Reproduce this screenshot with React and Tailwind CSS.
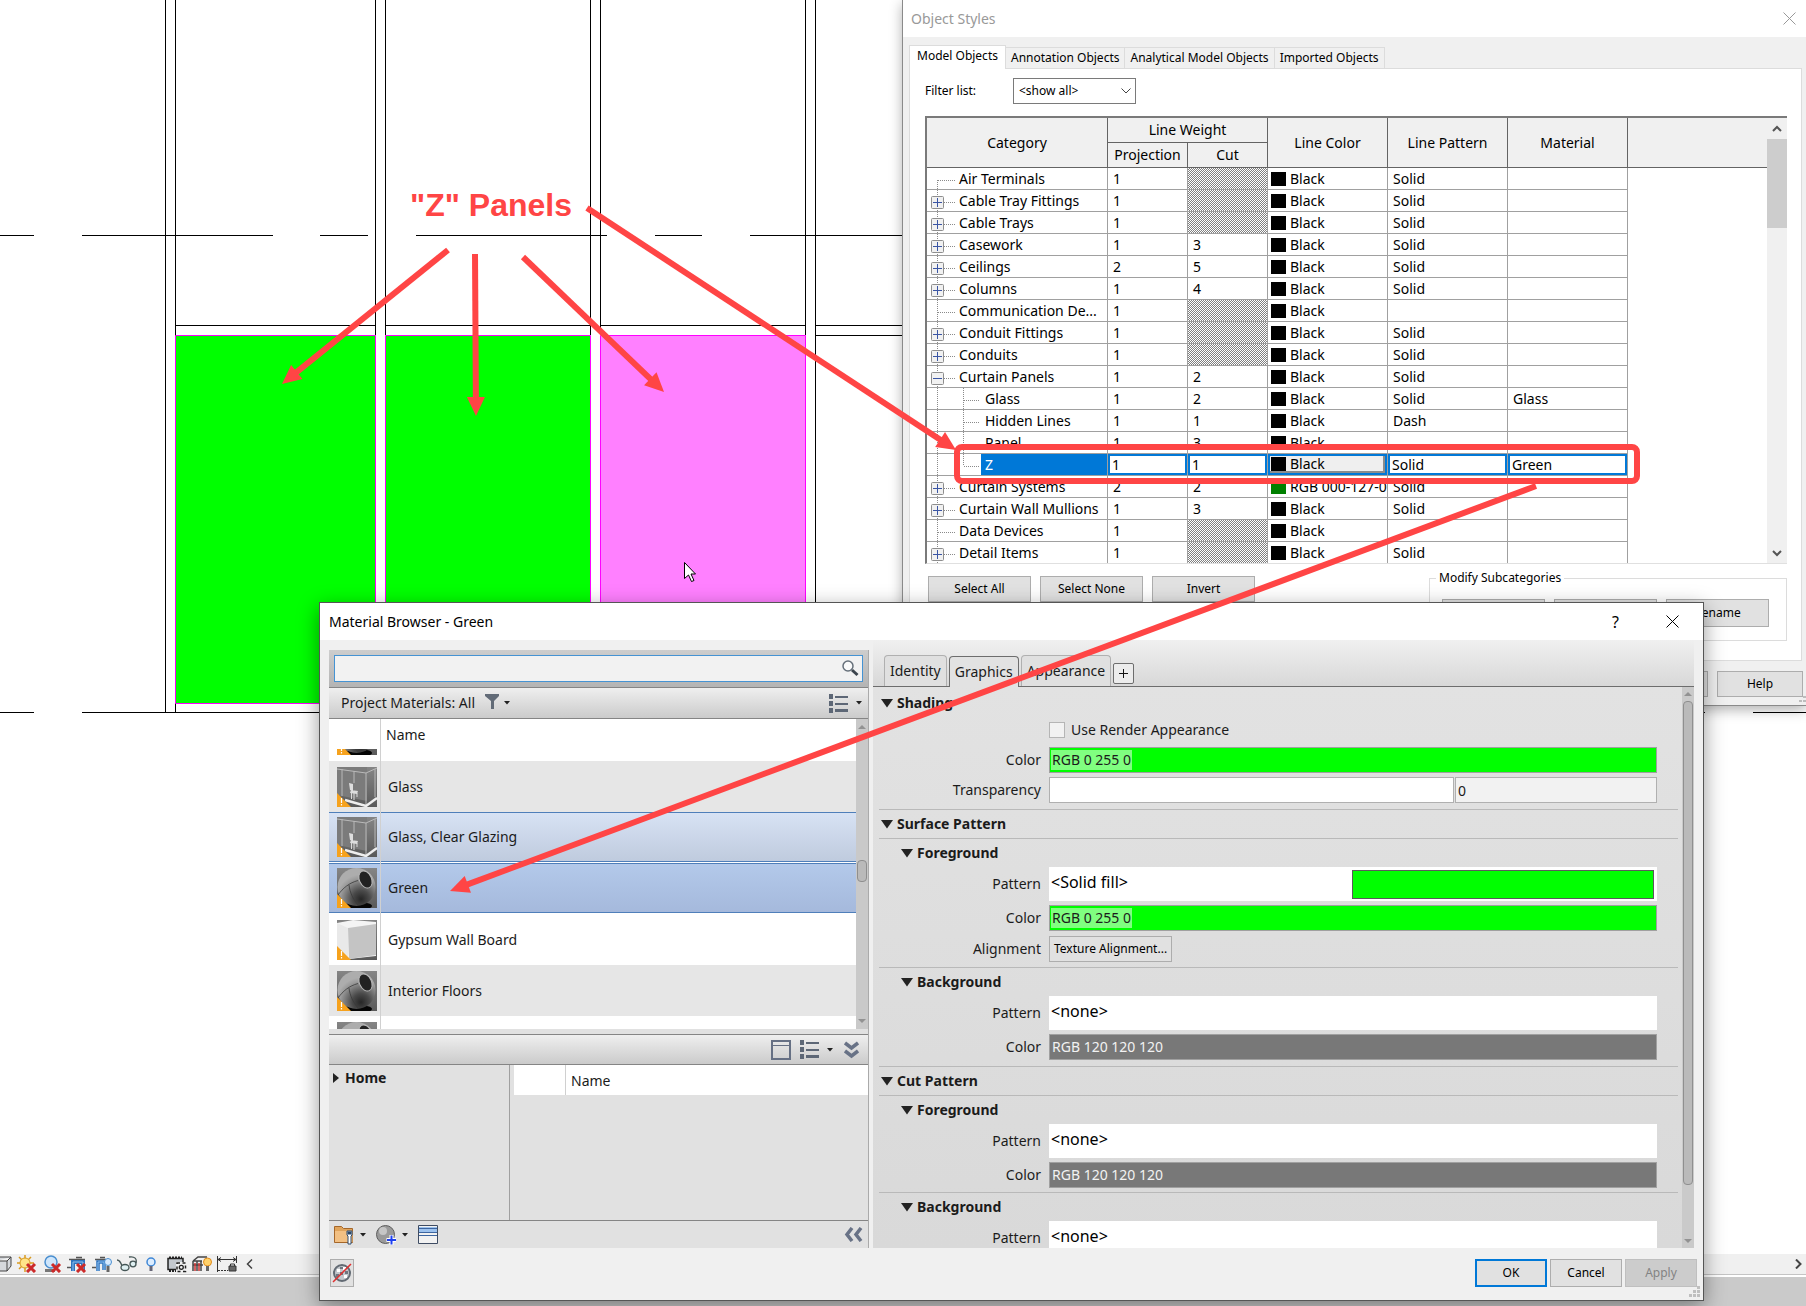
import React, { useState } from "react";
import clsx from "clsx";

const categories = [
  { name: "Air Terminals", projection: "1", color: "Black", pattern: "Solid" },
  { name: "Cable Tray Fittings", toggle: "+", projection: "1", color: "Black", pattern: "Solid" },
  { name: "Cable Trays", toggle: "+", projection: "1", color: "Black", pattern: "Solid" },
  { name: "Casework", toggle: "+", projection: "1", cut: "3", color: "Black", pattern: "Solid" },
  { name: "Ceilings", toggle: "+", projection: "2", cut: "5", color: "Black", pattern: "Solid" },
  { name: "Columns", toggle: "+", projection: "1", cut: "4", color: "Black", pattern: "Solid" },
  { name: "Communication De...", projection: "1", color: "Black" },
  { name: "Conduit Fittings", toggle: "+", projection: "1", color: "Black", pattern: "Solid" },
  { name: "Conduits", toggle: "+", projection: "1", color: "Black", pattern: "Solid" },
  { name: "Curtain Panels", toggle: "-", projection: "1", cut: "2", color: "Black", pattern: "Solid" },
  { name: "Glass", child: true, projection: "1", cut: "2", color: "Black", pattern: "Solid", material: "Glass" },
  { name: "Hidden Lines", child: true, projection: "1", cut: "1", color: "Black", pattern: "Dash" },
  { name: "Panel", child: true, projection: "1", cut: "3", color: "Black" },
  { name: "Z", child: true, last: true, selected: true, projection: "1", cut: "1", color: "Black", pattern: "Solid", material: "Green" },
  { name: "Curtain Systems", toggle: "+", projection: "2", cut: "2", color: "RGB 000-127-000", swatch: "#008000", pattern: "Solid" },
  { name: "Curtain Wall Mullions", toggle: "+", projection: "1", cut: "3", color: "Black", pattern: "Solid" },
  { name: "Data Devices", projection: "1", color: "Black" },
  { name: "Detail Items", toggle: "+", projection: "1", color: "Black", pattern: "Solid" }
];

const materials = [
  { name: "Glass", thumb: "glass", row: "h-[51px] bg-[#e6e6e6]" },
  { name: "Glass, Clear Glazing", thumb: "glass", row: "mb-px h-[50px] bg-linear-to-b from-[#d7e2f4] to-[#bfcbde] border-y border-[#4f7fba]" },
  { name: "Green", thumb: "sphere", row: "mb-px h-[50px] bg-linear-to-b from-[#b3c9ea] to-[#a5b9dc] border-y border-[#4f7fba]" },
  { name: "Gypsum Wall Board", thumb: "cube", row: "h-[51px] bg-white" },
  { name: "Interior Floors", thumb: "sphere", row: "h-[51px] bg-[#e6e6e6]" },
  { name: "", thumb: "sphere", row: "h-[51px] bg-white" }
];

const styleTabs = ["Model Objects", "Annotation Objects", "Analytical Model Objects", "Imported Objects"];

const cell = "border-r border-b border-[#a0a0a0] p-0 whitespace-nowrap overflow-hidden";
const headCell = "border-r border-b border-[#646464] p-0 font-normal";
const pushButton = "border border-[#adadad] bg-[#e1e1e1] text-[12px] leading-4 text-center";

const CloseIcon = ({ className }) => (
  <svg viewBox="0 0 13 13" className={clsx("h-[13px] w-[13px]", className)} fill="none" stroke="currentColor">
    <path d="M.5.5l12 12M12.5.5l-12 12" />
  </svg>
);

const Caret = () => (
  <svg viewBox="0 0 6 4" className="h-1 w-1.5 shrink-0"><path d="M0 0h6L3 3.500z" fill="#222" /></svg>
);

const Triangle = ({ className }) => (
  <svg viewBox="0 0 12 9" className={clsx("h-[9px] w-3 shrink-0", className)}><path d="M0 0h12L6 8.500z" fill="#222" /></svg>
);

const ListIcon = () => (
  <svg viewBox="0 0 19 19" className="h-[19px] w-[19px] shrink-0" fill="#5d6776">
    <path d="M0 0h4v5H0zM0 7h4v5H0zM0 14h4v5H0zM6 2h13v2H6zM6 9h13v2H6zM6 15h13v3H6z" />
  </svg>
);

const DottedLine = (props) => <path stroke="#8a8a8a" strokeDasharray="1 1" fill="none" {...props} />;

const TreeLines = ({ item, first }) => (
  <svg className={clsx("h-[21px] shrink-0", item.child ? "w-[54px]" : "w-[28px]")}>
    <DottedLine d={first ? "M10.500 12V22" : "M10.500 0V22"} />
    {item.child ? (
      <>
        <DottedLine d={item.last ? "M36.500 0V12" : "M36.500 0V22"} />
        <DottedLine d="M37 12.500H53" />
      </>
    ) : (
      <DottedLine d="M11 12.500H28" />
    )}
    {item.toggle && (
      <>
        <rect x="4.500" y="6.500" width="12" height="12" rx="1" fill="#f1f1f1" stroke="#8e8e8e" />
        <path d={item.toggle === "+" ? "M6 12.500h9M10.500 8v9" : "M6 12.500h9"} stroke="#3a55a4" />
      </>
    )}
  </svg>
);

const CategoryRow = ({ item, first }) => {
  const noCut = !item.cut;
  if (item.selected) {
    const input = "block h-[21px] w-full border-2 border-[#0078d7] bg-white px-0.5 outline-none";
    return (
      <tr className="h-[22px]">
        <td className={cell}>
          <div className="flex h-[21px]">
            <TreeLines item={item} />
            <span className="flex-1 bg-[#0078d7] pl-1 leading-[21px] text-white">{item.name}</span>
          </div>
        </td>
        <td className={cell}><input aria-label="Projection" className={input} defaultValue={item.projection} /></td>
        <td className={cell}><input aria-label="Cut" className={input} defaultValue={item.cut} /></td>
        <td className={cell}>
          <div className="h-[21px] border-2 border-[#0078d7]">
            <button className="flex h-[17px] w-full items-center border-r-2 border-b-2 border-[#8c8c8c] bg-[#efefef] pl-px">
              <span className="mr-1 h-[14px] w-[15px] bg-black" />
              {item.color}
            </button>
          </div>
        </td>
        <td className={cell}><input aria-label="Line Pattern" className={input} defaultValue={item.pattern} /></td>
        <td className={cell}><input aria-label="Material" className={input} defaultValue={item.material} /></td>
        <td className="p-0" />
      </tr>
    );
  }
  return (
    <tr className="h-[22px]">
      <td className={cell}>
        <div className="flex h-[21px]">
          <TreeLines item={item} first={first} />
          <span className="pl-1 leading-[21px]">{item.name}</span>
        </div>
      </td>
      <td className={clsx(cell, "pl-[5px]")}>{item.projection}</td>
      <td className={clsx(cell, noCut ? "bg-[repeating-conic-gradient(#808080_0_25%,#fff_0_50%)] bg-size-[2px_2px]" : "pl-[5px]")}>{item.cut}</td>
      <td className={clsx(cell, "pl-[3px]")}>
        <div className="flex h-[21px] items-center">
          <span className="mr-1 h-[14px] w-[15px] shrink-0" style={{ background: item.swatch || "#000" }} />
          {item.color}
        </div>
      </td>
      <td className={clsx(cell, "pl-[5px]")}>{item.pattern}</td>
      <td className={clsx(cell, "pl-[5px]")}>{item.material}</td>
      <td className="p-0" />
    </tr>
  );
};

const ObjectStyles = () => {
  const [tab, setTab] = useState("Model Objects");

  return (
    <div className="absolute top-0 right-0 left-[902px] border-b border-l border-[#8a8a8a] bg-[#f0f0f0] shadow-[0_4px_12px_rgba(0,0,0,0.3)]">
      <div className="flex h-[37px] items-center justify-between bg-white pr-2.5 pl-2 text-[14px] text-[#999]">
        <span>Object Styles</span>
        <button aria-label="Close"><CloseIcon /></button>
      </div>

      <div className="pt-2 pr-1 pl-1.5">
        <div className="flex h-[23px] items-end text-[12px]">
          {styleTabs.map((name) => (
            <button
              key={name}
              onClick={() => setTab(name)}
              className={clsx(
                "border-t border-r border-[#dcdcdc] whitespace-nowrap",
                name === tab ? "relative -mb-px h-6 border-l bg-white px-[7px] pb-1" : "h-[21px] px-[5px]"
              )}
            >
              {name}
            </button>
          ))}
        </div>

        <div className="border border-[#dcdcdc] bg-white pt-[9px] pr-[14px] pb-[19px] pl-[15px]">
          <div className="flex h-[26px] items-center text-[12px]">
            <label htmlFor="filter" className="w-[88px]">Filter list:</label>
            <div className="relative">
              <select id="filter" className="h-[26px] w-[123px] appearance-none border border-[#7a7a7a] bg-white pl-[5px]">
                <option>&lt;show all&gt;</option>
              </select>
              <svg viewBox="0 0 10 6" className="pointer-events-none absolute top-2.5 right-[5px] h-1.5 w-2.5" fill="none" stroke="#444">
                <path d="M.5.5L5 5 9.500.5" />
              </svg>
            </div>
          </div>

          <div className="mt-3 flex h-[448px] overflow-hidden border-t-2 border-b border-l-2 border-[#7a7a7a] border-b-[#e0e0e0]">
            <table className="w-full table-fixed border-separate border-spacing-0 text-[14px] leading-5">
              <colgroup>
                <col className="w-[181px]" />
                <col className="w-20" />
                <col className="w-20" />
                <col className="w-[120px]" />
                <col className="w-[120px]" />
                <col className="w-[120px]" />
                <col />
              </colgroup>
              <thead className="bg-[#f0f0f0]">
                <tr className="h-[25px]">
                  <th rowSpan={2} className={headCell}>Category</th>
                  <th colSpan={2} className={headCell}>Line Weight</th>
                  <th rowSpan={2} className={headCell}>Line Color</th>
                  <th rowSpan={2} className={headCell}>Line Pattern</th>
                  <th rowSpan={2} className={headCell}>Material</th>
                  <th rowSpan={2} className="border-b border-[#646464]" />
                </tr>
                <tr className="h-[25px]">
                  <th className={headCell}>Projection</th>
                  <th className={headCell}>Cut</th>
                </tr>
              </thead>
              <tbody>
                {categories.map((item, i) => (
                  <CategoryRow key={item.name} item={item} first={i === 0} />
                ))}
              </tbody>
            </table>
            <div className="flex w-5 shrink-0 flex-col items-center justify-between bg-[#f0f0f0] pb-1.5">
              <div className="flex w-full flex-col items-center">
                <svg viewBox="0 0 10 7" className="my-[7px] h-[7px] w-2.5" fill="none" stroke="#555" strokeWidth="2"><path d="M1 6l4-4 4 4" /></svg>
                <div className="h-[89px] w-full bg-[#cdcdcd]" />
              </div>
              <svg viewBox="0 0 10 7" className="h-[7px] w-2.5" fill="none" stroke="#555" strokeWidth="2"><path d="M1 1l4 4 4-4" /></svg>
            </div>
          </div>

          <div className="flex justify-between">
            <div className="mt-3 ml-[3px] flex gap-[9px]">
              {["Select All", "Select None", "Invert"].map((name) => (
                <button key={name} className={clsx(pushButton, "h-[26px] w-[103px]")}>{name}</button>
              ))}
            </div>
            <fieldset className="mt-1.5 h-[71px] w-[358px] border border-[#dcdcdc] px-3 text-[12px]">
              <legend className="-ml-1.5 px-[3px] leading-4">Modify Subcategories</legend>
              <div className="mt-[13px] flex gap-[9px]">
                {["New", "Delete", "Rename"].map((name) => (
                  <button key={name} className={clsx(pushButton, "h-7 w-[103px]")}>{name}</button>
                ))}
              </div>
            </fieldset>
          </div>
        </div>
      </div>

      <div className="relative flex justify-end gap-[9px] pt-2.5 pr-[3px] pb-2">
        {["OK", "Cancel", "Apply", "Help"].map((name) => (
          <button key={name} className={clsx(pushButton, "h-[26px] w-[86px]")}>{name}</button>
        ))}
        <svg viewBox="0 0 8 8" className="absolute right-0 bottom-0.5 h-2 w-2" fill="#bdbdbd"><path d="M5 1h3v2H5zM1 5h3v2H1zM5 5h3v2H5z" /></svg>
      </div>
    </div>
  );
};

const Warning = () => (
  <>
    <path d="M0 26L14 40H0z" fill="#f6a21d" />
    <path d="M4.500 31v5M4.500 37v1.500" stroke="#fff" strokeWidth="1.200" />
  </>
);

const Thumb = ({ kind }) => (
  <svg viewBox="0 0 40 40" className="h-10 w-10 shrink-0">
    <defs>
      <radialGradient id="ball" cx="0.620" cy="0.820" r="0.650">
        <stop offset="0" stopColor="#262626" />
        <stop offset="0.350" stopColor="#4a4a4a" />
        <stop offset="0.850" stopColor="#9c9c9c" />
        <stop offset="1" stopColor="#adadad" />
      </radialGradient>
      <linearGradient id="backdrop" x1="0" y1="0" x2="0" y2="1">
        <stop offset="0" stopColor="#858585" />
        <stop offset="1" stopColor="#5a5a5a" />
      </linearGradient>
    </defs>
    <rect width="40" height="40" fill="url(#backdrop)" />
    {kind === "sphere" && (
      <>
        <ellipse cx="21" cy="38" rx="14" ry="4" fill="#050505" />
        <circle cx="19.500" cy="19" r="19" fill="url(#ball)" />
        <ellipse cx="28.500" cy="11.500" rx="6" ry="9" fill="#222" stroke="#b9b9b9" transform="rotate(-25 28.500 11.500)" />
        <path d="M1 27C6 20 12 15 21 12.500M12 17c1 8 4 14 9 20" fill="none" stroke="#3a3a3a" strokeWidth="0.800" />
      </>
    )}
    {kind === "glass" && (
      <>
        <path d="M0 0h30v34L0 28z" fill="#7b7b7b" />
        <path d="M0 2l29 4 11-5M5 2v27M17 4v12M29 6v32M38 2v28" fill="none" stroke="#b9b9b9" />
        <path d="M8 33l21 6 11-8" fill="none" stroke="#efefef" strokeWidth="2.500" />
        <path d="M12 16l4 1v7l-3-1zM14 23l7 1-1 3-7-1z" fill="#dedede" />
        <path d="M14.500 26v6M20 26v4M17 26v7" fill="none" stroke="#dcdcdc" />
      </>
    )}
    {kind === "cube" && (
      <>
        <path d="M0 3l16-3 23 2v34l-27 3L0 28z" fill="#f4f4f4" />
        <path d="M11 8l28-4v31l-27 4z" fill="#c4c4c4" />
        <path d="M0 3l11 5v29L0 28z" fill="#e9e9e9" />
      </>
    )}
    <Warning />
  </svg>
);

const MaterialList = () => (
  <div className="flex h-[310px] bg-white">
    <div className="relative min-w-0 flex-1 overflow-hidden">
      <div className="flex h-[42px]">
        <div className="flex w-[51px] items-end pb-1.5 pl-2">
          <div className="flex h-1.5 w-10 items-end overflow-hidden"><Thumb kind="sphere" /></div>
        </div>
        <span className="pt-1.5 pl-1.5">Name</span>
      </div>
      {materials.map((m, i) => (
        <button key={i} className={clsx("flex w-full items-center pl-2 text-left", m.row)}>
          <Thumb kind={m.thumb} />
          <span className="pl-[11px]">{m.name}</span>
        </button>
      ))}
      <div className="absolute inset-y-0 left-[51px] w-px bg-[#d0d0d0]" />
    </div>
    <div className="flex w-3 shrink-0 flex-col items-center bg-[#c9c9c9] py-1.5">
      <svg viewBox="0 0 8 4" className="h-1 w-2"><path d="M0 4h8L4 0z" fill="#929292" /></svg>
      <div className="mt-[131px] h-[22px] w-2.5 rounded-sm border border-[#8f8f8f] bg-[#bababa]" />
      <svg viewBox="0 0 8 4" className="mt-auto h-1 w-2"><path d="M0 0h8L4 4z" fill="#929292" /></svg>
    </div>
  </div>
);

const toolbar = "flex shrink-0 items-center border-y border-[#858585] bg-linear-to-b from-[#efefef] to-[#cbcbcb]";

const MaterialPanel = () => (
  <div className="mt-2.5 ml-[9px] flex w-[540px] shrink-0 flex-col border-r border-[#aaa] bg-[#e1e1e1]">
    <div className="bg-linear-to-b from-[#cdcdcd] to-[#b4b4b4] p-[5px]">
      <div className="relative">
        <input aria-label="Search materials" className="block h-[27px] w-full border border-[#4593d3] bg-[#f2f2f2] px-1 outline-none" />
        <svg viewBox="0 0 18 18" className="absolute top-1 right-1 h-[18px] w-[18px]" fill="none">
          <circle cx="7" cy="7" r="5" fill="#fafafa" stroke="#66707a" strokeWidth="1.500" />
          <path d="M11 11l5.500 5" stroke="#3c444d" strokeWidth="3" />
        </svg>
      </div>
    </div>

    <div className={clsx(toolbar, "h-8 pr-1.5 pl-3")}>
      <button className="flex items-center">
        Project Materials: All
        <svg viewBox="0 0 14 15" className="mr-[5px] mb-1 ml-2.5 h-[15px] w-3.5" fill="#626b77"><path d="M0 0h14v2L9 7v8H6V7L0 2z" /></svg>
        <Caret />
      </button>
      <button aria-label="View" className="ml-auto flex items-center gap-2"><ListIcon /><Caret /></button>
    </div>

    <MaterialList />

    <div className={clsx(toolbar, "mt-[5px] h-[31px] justify-end gap-[9px] pr-[9px]")}>
      <button aria-label="Show library panel">
        <svg viewBox="0 0 20 20" className="block h-5 w-5" fill="none" stroke="#667084"><path d="M1 1h18v18H1z" strokeWidth="2" /><path d="M2 5.500h16" /></svg>
      </button>
      <button aria-label="Library view" className="flex items-center gap-2"><ListIcon /><Caret /></button>
      <button aria-label="Collapse" className="ml-0.5">
        <svg viewBox="0 0 15 18" className="block h-[18px] w-[15px]" fill="none" stroke="#687286" strokeWidth="3.500"><path d="M1 2l6.500 5L14 2M1 10l6.500 5 6.500-5" /></svg>
      </button>
    </div>

    <div className="flex min-h-0 flex-1">
      <div className="w-[181px] shrink-0 border-r border-[#a0a0a0]">
        <button className="flex items-center gap-1.5 pt-[3px] pl-1 font-bold">
          <svg viewBox="0 0 6 10" className="h-2.5 w-1.5"><path d="M0 0v10l6-5z" fill="#222" /></svg>
          Home
        </button>
      </div>
      <div className="ml-1 flex h-[30px] flex-1 items-center bg-white">
        <div className="h-full w-[52px] border-r border-[#d0d0d0]" />
        <span className="pt-0.5 pl-[5px]">Name</span>
      </div>
    </div>

    <div className="flex h-[28px] shrink-0 items-center border-t border-[#858585] px-[5px]">
      <button aria-label="Libraries" className="flex items-center gap-1.5">
        <svg viewBox="0 0 20 20" className="h-5 w-5">
          <path d="M.5 1.500h7l2 2h9v14H.5z" fill="#e0a45c" stroke="#a5672a" />
          <path d="M1 6h17.500v11H1z" fill="#f2c083" />
          <path d="M13 6h5v4l-1 1v8h-3v-8l-1-1z" fill="#fff" stroke="#2c4a6c" />
          <path d="M13.500 6.500h4v3h-4z" fill="#2c4a6c" />
        </svg>
        <Caret />
      </button>
      <button aria-label="New material" className="ml-2.5 flex items-center gap-1.5">
        <svg viewBox="0 0 20 20" className="h-5 w-5">
          <circle cx="9.500" cy="9.500" r="9" fill="#9a9a9a" stroke="#5d5d5d" />
          <circle cx="7" cy="6" r="4" fill="#c6c6c6" />
          <path d="M15.500 10v10M10.500 15h10" stroke="#fff" strokeWidth="4" />
          <path d="M15.500 10.500v9M11 15h9" stroke="#1d3ff0" strokeWidth="2" />
        </svg>
        <Caret />
      </button>
      <button aria-label="Asset browser" className="ml-2.5">
        <svg viewBox="0 0 20 19" className="block h-[19px] w-5">
          <path d="M.5.500h19v18H.5z" fill="#f2f2f2" stroke="#3f4c63" />
          <path d="M1 2h18v5H1z" fill="#9cc2ef" />
          <path d="M1 3.500h18M1 7.500h18M1 10.500h18" stroke="#3e66a0" />
        </svg>
      </button>
      <button aria-label="Hide panel" className="ml-auto">
        <svg viewBox="0 0 19 15" className="block h-[15px] w-[19px]" fill="none" stroke="#687286" strokeWidth="3.500"><path d="M8 1L3 7.500 8 14M17 1l-5 6.500 5 6.500" /></svg>
      </button>
    </div>
  </div>
);

const Heading = ({ children, nested }) => (
  <h3 className={clsx("flex h-7 items-center gap-1 font-bold", nested ? "pl-[22px]" : "pl-0.5")}>
    <Triangle />
    {children}
  </h3>
);

const Row = ({ label, children }) => (
  <div className="flex items-center gap-2 pr-[21px]">
    <span className="w-[162px] shrink-0 text-right">{label}</span>
    <div className="flex min-w-0 flex-1 gap-px">{children}</div>
  </div>
);

const ColorField = ({ green }) => (
  <button
    className={clsx(
      "flex h-[26px] flex-1 items-center border border-[#a0a0a0] pl-px text-left",
      green ? "bg-[#00ff00]" : "bg-[#787878] text-[#f2f2f2]"
    )}
  >
    <span className={clsx("px-px leading-5", green && "bg-[#80ff80]")}>{green ? "RGB 0 255 0" : "RGB 120 120 120"}</span>
  </button>
);

const PatternField = ({ solid }) => (
  <button className="flex h-[34px] flex-1 items-center bg-white pr-[3px] pl-0.5 text-left text-[16px] leading-5 text-black">
    <span className="flex-1 pb-1">{solid ? "<Solid fill>" : "<none>"}</span>
    {solid && <span className="h-[29px] flex-1 border border-[#5a5a5a] bg-[#00ff00]" />}
  </button>
);

const rule = "border-t border-[#b9b9b9]";

const GraphicsPanel = () => {
  const [tab, setTab] = useState("Graphics");

  return (
    <div className="mr-[9px] ml-1 flex min-w-0 flex-1 flex-col">
      <div className="flex h-[47px] shrink-0 items-end gap-0.5 border-b border-[#6d6d6d] bg-linear-to-b from-[#f0f0f0] to-[#d8d8d8] pl-[11px]">
        {["Identity", "Graphics", "Appearance"].map((name) => (
          <button
            key={name}
            onClick={() => setTab(name)}
            className={clsx(
              "h-[31px] rounded-t border border-b-0 px-[5px]",
              name === tab ? "relative -mb-px h-8 border-[#6d6d6d] bg-[#e2e2e2]" : "border-[#b0b0b0] bg-[#e0e0e0]"
            )}
          >
            {name}
          </button>
        ))}
        <button aria-label="Add asset" className="mb-0.5 flex h-[21px] w-[21px] items-center justify-center rounded-xs border border-[#6d6d6d] bg-[#ececec]">
          <svg viewBox="0 0 9 9" className="h-[9px] w-[9px]" stroke="#111"><path d="M0 4.500h9M4.500 0v9" /></svg>
        </button>
      </div>

      <div className="flex min-h-0 flex-1 bg-linear-to-b from-[#e2e2e2] to-[#d9d9d9]">
        <div className="min-w-0 flex-1 overflow-hidden pr-1 pl-1.5">
          <section className="grid gap-1 pt-0.5 pb-1.5">
            <Heading>Shading</Heading>
            <label className="mb-1 flex h-[18px] items-center gap-1.5 pl-[170px]">
              <input type="checkbox" className="h-4 w-4 appearance-none border border-[#b5b5b5] bg-[#f2f2f2]" />
              Use Render Appearance
            </label>
            <Row label="Color"><ColorField green /></Row>
            <Row label="Transparency">
              <input aria-label="Transparency" className="h-[26px] w-[405px] border border-[#b0b0b0] bg-white outline-none" />
              <input aria-label="Transparency value" defaultValue="0" className="h-[26px] w-0 flex-1 border border-[#b0b0b0] bg-[#f2f2f2] px-0.5 outline-none" />
            </Row>
          </section>

          <section className={rule}>
            <Heading>Surface Pattern</Heading>
            <div className={clsx(rule, "pb-[5px]")}>
              <Heading nested>Foreground</Heading>
              <div className="grid gap-1">
                <Row label="Pattern"><PatternField solid /></Row>
                <Row label="Color"><ColorField green /></Row>
                <Row label="Alignment">
                  <button className="mt-px h-[26px] border border-[#adadad] bg-[#e1e1e1] px-1 text-[12px] text-black">Texture Alignment...</button>
                </Row>
              </div>
            </div>
            <div className={clsx(rule, "pb-1.5")}>
              <Heading nested>Background</Heading>
              <div className="grid gap-1">
                <Row label="Pattern"><PatternField /></Row>
                <Row label="Color"><ColorField /></Row>
              </div>
            </div>
          </section>

          <section className={rule}>
            <Heading>Cut Pattern</Heading>
            <div className={clsx(rule, "pb-1")}>
              <Heading nested>Foreground</Heading>
              <div className="grid gap-1">
                <Row label="Pattern"><PatternField /></Row>
                <Row label="Color"><ColorField /></Row>
              </div>
            </div>
            <div className={rule}>
              <Heading nested>Background</Heading>
              <Row label="Pattern"><PatternField /></Row>
            </div>
          </section>
        </div>

        <div className="flex w-3 shrink-0 flex-col items-center bg-[#cacaca] py-[5px]">
          <svg viewBox="0 0 8 4" className="h-1 w-2 shrink-0"><path d="M0 4h8L4 0z" fill="#929292" /></svg>
          <div className="mt-[5px] mb-[54px] w-2.5 flex-1 rounded-sm border border-[#8f8f8f] bg-[#bababa]" />
          <svg viewBox="0 0 8 4" className="h-1 w-2 shrink-0"><path d="M0 0h8L4 4z" fill="#929292" /></svg>
        </div>
      </div>
    </div>
  );
};

const MaterialBrowser = () => (
  <div className="absolute top-[602px] right-[102px] bottom-[5px] left-[319px] flex flex-col border border-[#555] bg-[#f0f0f0] text-[14px] leading-5 text-[#1b1b1b] shadow-[0_6px_20px_rgba(0,0,0,0.4)]">
    <div className="flex h-[37px] shrink-0 items-center bg-white pr-6 pl-[9px] text-black">
      <span className="flex-1">Material Browser - Green</span>
      <button aria-label="Help" className="mr-[47px] text-[16px]">?</button>
      <button aria-label="Close"><CloseIcon /></button>
    </div>

    <div className="flex min-h-0 flex-1">
      <MaterialPanel />
      <GraphicsPanel />
    </div>

    <div className="relative flex h-[52px] shrink-0 items-start gap-[3px] pt-[11px] pr-1.5 pl-2.5 text-black">
      <button aria-label="Render preview" className="mr-auto flex h-7 w-6 items-center justify-center border border-[#adadad] bg-[#e1e1e1]">
        <svg viewBox="0 0 20 20" className="h-5 w-5">
          <circle cx="10" cy="10" r="8" fill="#c3c7cc" stroke="#626a73" strokeWidth="2" />
          <path d="M5 6h3v3H5zM11 4h3v3h-3zM12 12h3v3h-3z" fill="#fff" />
          <path d="M8 9h3v3H8zM4 11h3v3H4zM8 4h3v2H8zM13 8h3v3h-3z" fill="#6e7680" />
          <path d="M1 19L19 1" stroke="#e03030" strokeWidth="1.500" />
        </svg>
      </button>
      <button className="h-7 w-[72px] border-2 border-[#0078d7] bg-[#e1e1e1] text-[12px]">OK</button>
      <button className={clsx(pushButton, "h-7 w-[72px]")}>Cancel</button>
      <button disabled className="h-7 w-[72px] border border-[#bfbfbf] bg-[#cccccc] text-[12px] text-[#838383]">Apply</button>
      <svg viewBox="0 0 12 12" className="absolute right-0.5 bottom-0.5 h-3 w-3" fill="#bfbfbf">
        <path d="M8 0h3v3H8zM4 4h3v3H4zM8 4h3v3H8zM0 8h3v3H0zM4 8h3v3H4zM8 8h3v3H8z" />
      </svg>
    </div>
  </div>
);

const CurtainWall = () => (
  <svg className="absolute inset-0 h-full w-full" stroke="#000" fill="none">
    <path d="M0 235.500h34M82 235.500h191M320 235.500h48M416 235.500h191M655 235.500h47M750 235.500h152" />
    <path d="M165.500 0v712M175.500 0v712M375.500 0v335M385.500 0v335M590.500 0v335M600.500 0v335M805.500 0v335M815.500 0v602" />
    <path d="M175 325.500h200M385 325.500h205M600 325.500h205M815 325.500h87M815 335.500h87" />
    <path d="M0 712.500h34M82 712.500h238M1657 712.500h48M1753 712.500h400" />
    <g stroke="#ff00ff">
      <path d="M175.500 335.500h200v368h-200z" fill="#00ff00" />
      <path d="M385.500 335.500h205v368h-205z" fill="#00ff00" />
      <path d="M600.500 335.500h205v368h-205z" fill="#ff80ff" />
    </g>
    <path d="M684.500 562.500v16l4-3.500 3 6.500 2.500-1-3-6.500h4.500z" fill="#fff" />
  </svg>
);

const RedCross = () => <path d="M10 9l8 8M18 9l-8 8" stroke="#cc2a2a" strokeWidth="3" />;
const toolIcon = "h-[18px] w-5 shrink-0";

const ViewBar = () => (
  <div className="absolute inset-x-0 bottom-0">
    <div className="flex h-[21px] items-center border-b border-[#c4c4c4] bg-[#f0f0f0] pr-1">
      <div className="flex items-center gap-[5px]">
        <svg viewBox="0 0 12 18" className="h-[18px] w-3" fill="#d5d8dc" stroke="#444"><path d="M-4 6h11v10H-4zM7 6l4-4v9l-4 5M-4 6l4-4h11" /></svg>
        <svg viewBox="0 0 20 18" className={toolIcon}>
          <path d="M8 0v17M0 8h17M2 2l12 12M14 2L2 14" stroke="#d99a20" strokeWidth="1.500" />
          <circle cx="8" cy="8" r="5" fill="#ffe58a" stroke="#d99a20" />
          <RedCross />
        </svg>
        <svg viewBox="0 0 20 18" className={toolIcon}>
          <path d="M3 15.500h10" stroke="#777" strokeWidth="3" />
          <circle cx="9" cy="7" r="6" fill="#cfe6fb" stroke="#4a8fd0" strokeWidth="1.500" />
          <RedCross />
        </svg>
        <svg viewBox="0 0 20 18" className={toolIcon} fill="none">
          <path d="M0 12.500h4M2 4.500h16M9 2.500h6" stroke="#555" strokeWidth="1.500" />
          <path d="M6 16V7h10v8" stroke="#2e74c0" strokeWidth="4" />
          <path d="M6 16V7h10v8" stroke="#8fc0ee" />
          <RedCross />
        </svg>
        <svg viewBox="0 0 20 18" className={toolIcon} fill="none">
          <path d="M0 12.500h4M3 4.500h11M8 2.500h5" stroke="#555" strokeWidth="1.500" />
          <path d="M6 16V7h6v8" stroke="#2e74c0" strokeWidth="3.500" />
          <path d="M6 16V7h6v8" stroke="#8fc0ee" />
          <circle cx="16" cy="7" r="3.500" fill="#d8ebff" stroke="#4a8fd0" />
          <path d="M16 11v6" stroke="#666" strokeWidth="3" />
        </svg>
        <svg viewBox="0 0 20 18" className={toolIcon} fill="#dff0f2" stroke="#455" strokeWidth="1.300">
          <path d="M0 5c3 0 4 3 5 6M12 2c6-1 8 2 7 6" fill="none" />
          <ellipse cx="8" cy="12.500" rx="4" ry="3" /><ellipse cx="16" cy="9" rx="3" ry="2.800" />
        </svg>
        <svg viewBox="0 0 20 18" className={toolIcon}>
          <circle cx="9" cy="7" r="4" fill="#dcedff" stroke="#3f87d6" strokeWidth="1.500" />
          <path d="M9 11v5" stroke="#667" strokeWidth="3" />
        </svg>
        <svg viewBox="0 0 20 18" className={toolIcon} fill="none">
          <path d="M1 3.500h15v11H1z" fill="#c3c8ce" stroke="#222" strokeWidth="1.500" />
          <path d="M2 2.500h13M2 16h8" stroke="#222" strokeWidth="2" strokeDasharray="2 1" />
          <path d="M9 7h11v11H9z" fill="#f0f0f0" />
          <rect x="10" y="8" width="8.500" height="8.500" stroke="#222" strokeDasharray="3 2.500" strokeWidth="1.500" />
          <circle cx="14.300" cy="12.300" r="2" stroke="#222" strokeWidth="1.300" />
        </svg>
        <svg viewBox="0 0 20 18" className={toolIcon} fill="none">
          <path d="M1 6l5-4h9M1 6v10M5 6v10M9 6v10M1 6h9M1 10h10" stroke="#444" strokeWidth="1.500" />
          <path d="M3 16V8M7 16V8" stroke="#c33" strokeWidth="1.500" />
          <circle cx="15.500" cy="7" r="4" fill="#ffd26a" stroke="#e08a1c" />
          <path d="M15.500 11v5" stroke="#666" strokeWidth="3" />
        </svg>
        <svg viewBox="0 0 20 18" className={toolIcon} fill="none" stroke="#333">
          <path d="M.5 1v16M19.500 1v7M1 4.500h18M4 2.500l-3 2 3 2M16 2.500l3 2-3 2" />
          <path d="M1 15.500h10" strokeDasharray="2 1" />
          <path d="M12 11h7v5h-7z" fill="#666" /><path d="M13.500 11V9h4v2" />
        </svg>
        <svg viewBox="0 0 7 10" className="ml-1 h-2.5 w-[7px]" fill="none" stroke="#444" strokeWidth="1.500"><path d="M6 .5L1.500 5 6 9.500" /></svg>
      </div>
      <svg viewBox="0 0 7 10" className="ml-auto h-2.5 w-[7px]" fill="none" stroke="#444" strokeWidth="2"><path d="M1 .5L5.500 5 1 9.500" /></svg>
    </div>
    <div className="h-[31px] border-t-2 border-white bg-[#cacaca]" />
  </div>
);

// shaft stops short of the tip so that the head stays sharp
const Arrow = ({ from, to }) => {
  const angle = Math.atan2(to[1] - from[1], to[0] - from[0]);
  const bx = to[0] - 16 * Math.cos(angle);
  const by = to[1] - 16 * Math.sin(angle);
  return (
    <>
      <line x1={from[0]} y1={from[1]} x2={bx} y2={by} stroke="#ff4545" strokeWidth="6" />
      <path d="M0 0L-19 -9V9z" fill="#ff4545" transform={`translate(${to[0]} ${to[1]}) rotate(${(angle * 180) / Math.PI})`} />
    </>
  );
};

const Annotations = () => (
  <div className="pointer-events-none absolute inset-0">
    <p className="absolute top-[186px] left-[410px] font-['Liberation_Sans',sans-serif] text-[32px] leading-[38px] font-bold text-[#ff4545]">"Z" Panels</p>
    <svg className="h-full w-full">
      <Arrow from={[448, 250]} to={[282, 384]} />
      <Arrow from={[475, 254]} to={[476, 416]} />
      <Arrow from={[523, 257]} to={[664, 392]} />
      <Arrow from={[587, 208]} to={[956, 450]} />
      <Arrow from={[1536, 486]} to={[450, 891]} />
      <rect x="957" y="447" width="680" height="34" rx="5" fill="none" stroke="#ff4545" strokeWidth="6" />
    </svg>
  </div>
);

const App = () => {
  return (
    <div className="relative h-screen min-h-[1000px] overflow-hidden bg-white font-['Noto_Sans',sans-serif] text-black">
      <CurtainWall />
      <ViewBar />
      <ObjectStyles />
      <MaterialBrowser />
      <Annotations />
    </div>
  );
};

export default App;
